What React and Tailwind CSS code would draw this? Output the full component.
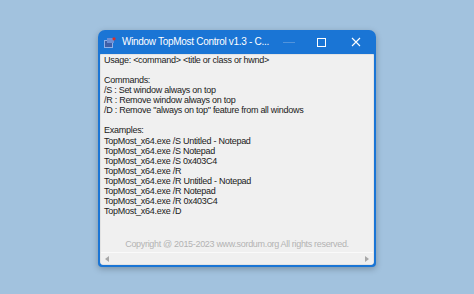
const lines = [
  "Usage: <command> <title or class or hwnd>",
  "",
  "Commands:",
  "/S : Set window always on top",
  "/R : Remove window always on top",
  '/D : Remove "always on top" feature from all windows',
  "",
  "Examples:",
  "TopMost_x64.exe /S Untitled - Notepad",
  "TopMost_x64.exe /S Notepad",
  "TopMost_x64.exe /S 0x403C4",
  "TopMost_x64.exe /R",
  "TopMost_x64.exe /R Untitled - Notepad",
  "TopMost_x64.exe /R Notepad",
  "TopMost_x64.exe /R 0x403C4",
  "TopMost_x64.exe /D",
];

const AppIcon = () => (
  <svg width="12" height="11" viewBox="0 0 12 11">
    <rect x="0.5" y="3.5" width="8" height="7" fill="#3f5fa8" stroke="#8fb0e8" />
    <rect x="3" y="1" width="7" height="5" fill="#6b8fd6" />
    <circle cx="10" cy="1.8" r="1.6" fill="#d8302a" />
  </svg>
);

const App = () => {
  return (
    <main
      className="h-[294px] w-[474px] overflow-hidden bg-[#a2c2de] pl-[98px] pt-[30px]"
      style={{ fontFamily: '"Liberation Sans", Arial, sans-serif' }}
    >
      <div className="flex h-[237px] w-[278px] flex-col rounded-t-[7px] rounded-b-[4px] bg-[#1a75d5] shadow-[0_2px_6px_rgba(0,0,0,0.25)]">
        <div className="flex h-[24px] items-center pl-[6px] text-white">
          <AppIcon />
          <span className="ml-[6px] flex-1 whitespace-nowrap text-[10px] leading-none tracking-[-0.3px]">
            Window TopMost Control v1.3 - C...
          </span>
          <div className="flex h-full w-[33px] items-center justify-center">
            <span className="h-px w-[12px] bg-[#5294dc]" />
          </div>
          <div className="flex h-full w-[33px] items-center justify-center">
            <span className="h-[9px] w-[9px] border border-white" />
          </div>
          <div className="flex h-full w-[38px] items-center justify-center pr-[2px]">
            <svg width="10" height="10" viewBox="0 0 10 10">
              <path d="M1 1 L9 9 M9 1 L1 9" stroke="#fff" strokeWidth="1.1" />
            </svg>
          </div>
        </div>
        <div className="mx-[2px] mb-[2px] flex flex-1 flex-col rounded-b-[3px] border border-[#e3e3e3] bg-[#f0f0f0]">
          <div className="pl-[3px] text-[9px] leading-[10.07px] tracking-[-0.27px] text-[#1a1a1a]">
            {lines.map((line, i) => (
              <div key={i} className="h-[10.07px] whitespace-pre">
                {line || " "}
              </div>
            ))}
          </div>
          <div className="flex-1" />
          <p className="pb-[3px] text-center text-[9px] leading-[10px] tracking-[-0.32px] text-[#b3b3b3]">
            Copyright @ 2015-2023 www.sordum.org All rights reserved.
          </p>
          <div className="flex h-[12px] items-center justify-between border-t border-[#fafafa] bg-[#f0f0f0] px-[4px]">
            <span className="h-0 w-0 border-y-[3px] border-r-[4px] border-y-transparent border-r-[#a8a8a8]" />
            <span className="h-0 w-0 border-y-[3px] border-l-[4px] border-y-transparent border-l-[#a8a8a8]" />
          </div>
        </div>
      </div>
    </main>
  );
};

export default App;
